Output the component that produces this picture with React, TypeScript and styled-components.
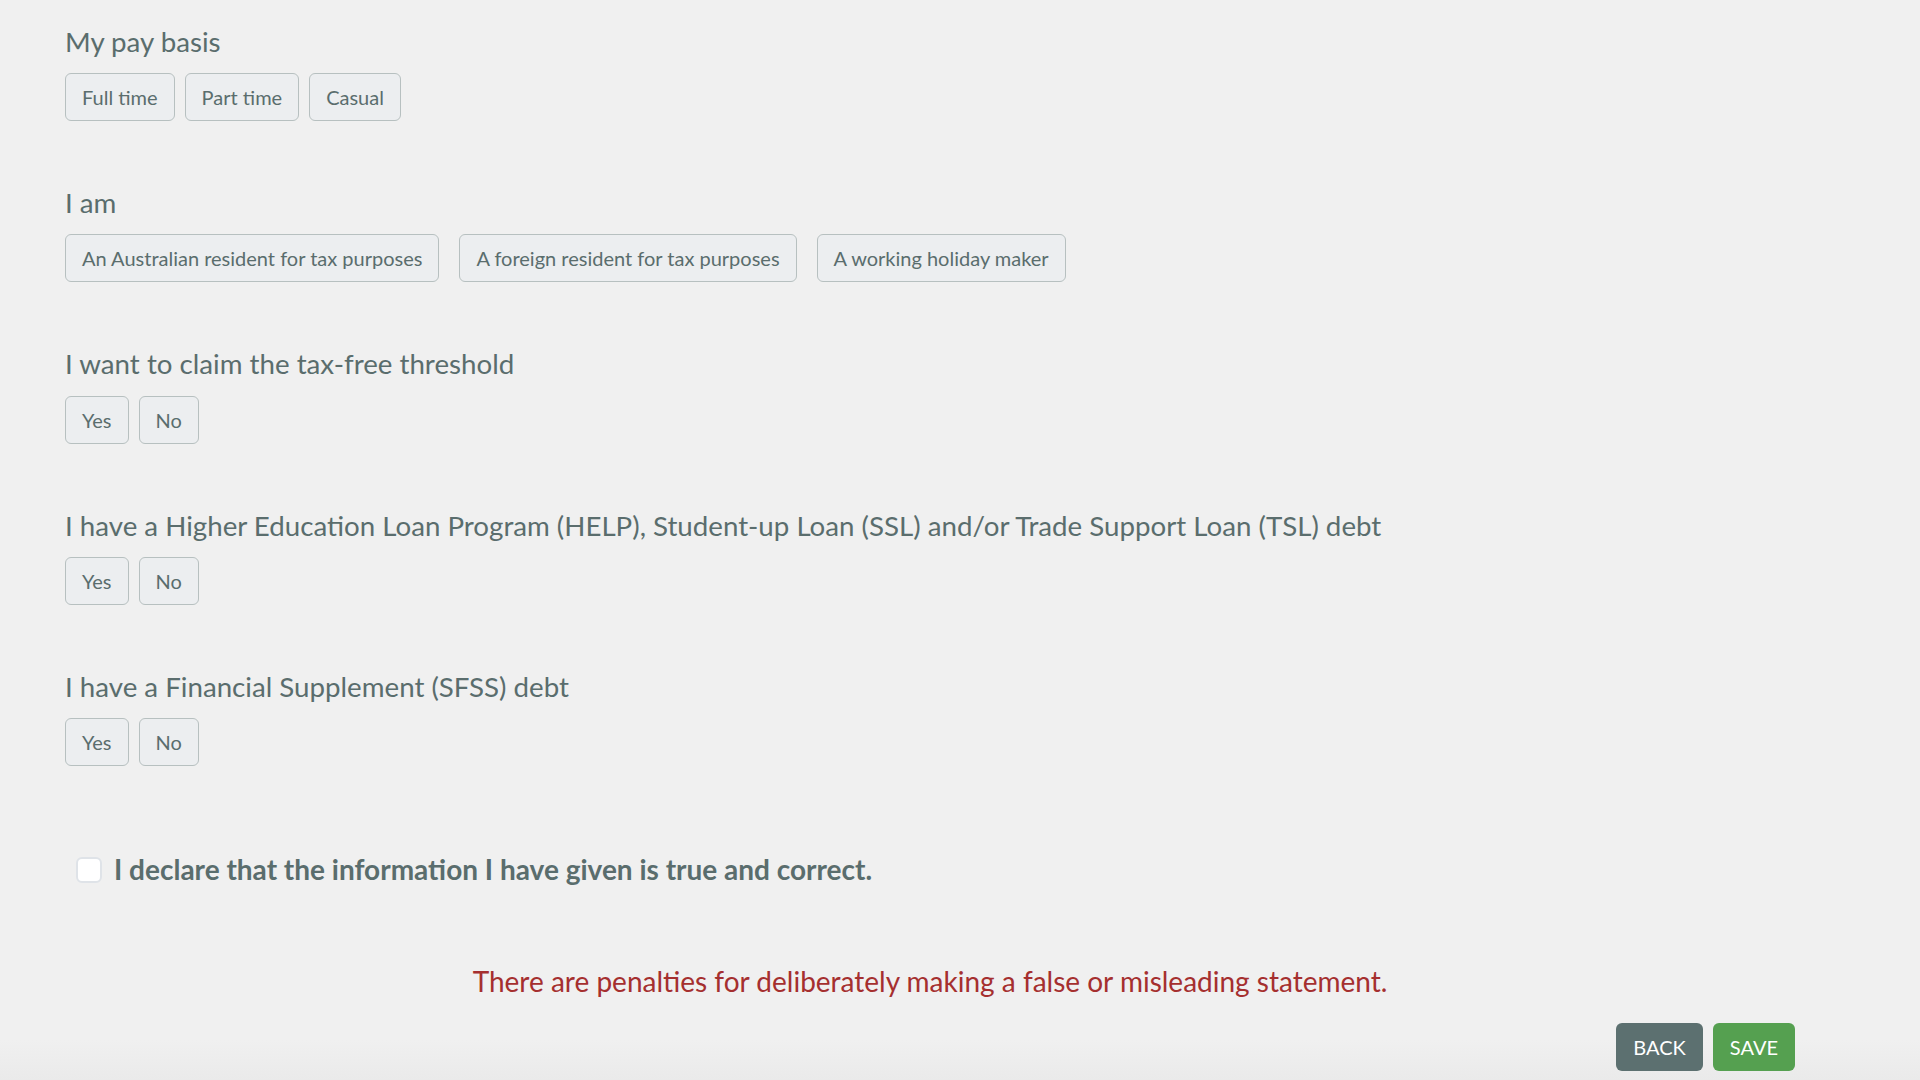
import styled, { createGlobalStyle } from 'styled-components'

const GlobalStyle = createGlobalStyle`
  html, body {
    margin: 0;
    padding: 0;
  }
  body {
    min-height: 1080px;
    background: linear-gradient(to bottom, #f0f0f0 0px, #f0f0f0 1040px, #eaeaea 1080px);
    font-family: Lato, "Open Sans", sans-serif;
    color: #5a6d6d;
  }
`

const Page = styled.div`
  width: 1730px;
  padding: 25px 0 0 65px;
  display: flex;
  flex-direction: column;
`

const Section = styled.section`
  margin-bottom: 65px;
`

const Heading = styled.h3`
  margin: 0 0 15px;
  font-size: 27.7px;
  line-height: 1.2;
  font-weight: 400;
  color: #5a6d6d;
`

const Options = styled.div<{ $gap: number }>`
  display: flex;
  gap: ${p => p.$gap}px;
`

const Option = styled.button`
  height: 48px;
  padding: 0 16px;
  border: 1.5px solid #b7c0c0;
  border-radius: 6px;
  background: #eceef0;
  color: #5a6d6d;
  font-family: Lato, sans-serif;
  font-size: 20px;
  cursor: pointer;
`

const Declaration = styled.label`
  display: flex;
  align-items: center;
  gap: 12px;
  margin: 22px 0 0 11px;
  font-size: 28px;
  line-height: 1.2;
  font-weight: 700;
  color: #5a6d6d;
`

const Box = styled.span`
  flex: none;
  width: 22px;
  height: 22px;
  border: 2px solid #dfe3e8;
  border-radius: 6px;
  background: #fff;
`

const Warning = styled.p`
  margin: 78px 0 0;
  text-align: center;
  font-size: 28px;
  line-height: 1.2;
  color: #a52f2f;
`

const Footer = styled.div`
  display: flex;
  justify-content: flex-end;
  gap: 10px;
  margin-top: 25px;
`

const Action = styled.button<{ $tone: 'back' | 'save' }>`
  height: 48px;
  padding: 0 17px;
  border: none;
  border-radius: 6px;
  background: ${p => (p.$tone === 'save' ? '#55a050' : '#5c7070')};
  color: #fff;
  font-family: Lato, sans-serif;
  font-size: 20px;
  text-transform: uppercase;
  cursor: pointer;
`

const questions = [
  { title: 'My pay basis', options: ['Full time', 'Part time', 'Casual'], gap: 10 },
  {
    title: 'I am',
    options: [
      'An Australian resident for tax purposes',
      'A foreign resident for tax purposes',
      'A working holiday maker',
    ],
    gap: 20,
  },
  { title: 'I want to claim the tax-free threshold', options: ['Yes', 'No'], gap: 10 },
  {
    title:
      'I have a Higher Education Loan Program (HELP), Student-up Loan (SSL) and/or Trade Support Loan (TSL) debt',
    options: ['Yes', 'No'],
    gap: 10,
  },
  { title: 'I have a Financial Supplement (SFSS) debt', options: ['Yes', 'No'], gap: 10 },
]

export default function App() {
  return (
    <>
      <GlobalStyle />
      <Page>
        {questions.map(q => (
          <Section key={q.title}>
            <Heading>{q.title}</Heading>
            <Options $gap={q.gap}>
              {q.options.map(o => (
                <Option key={o}>{o}</Option>
              ))}
            </Options>
          </Section>
        ))}
        <Declaration>
          <Box />
          I declare that the information I have given is true and correct.
        </Declaration>
        <Warning>There are penalties for deliberately making a false or misleading statement.</Warning>
        <Footer>
          <Action $tone="back">Back</Action>
          <Action $tone="save">Save</Action>
        </Footer>
      </Page>
    </>
  )
}
